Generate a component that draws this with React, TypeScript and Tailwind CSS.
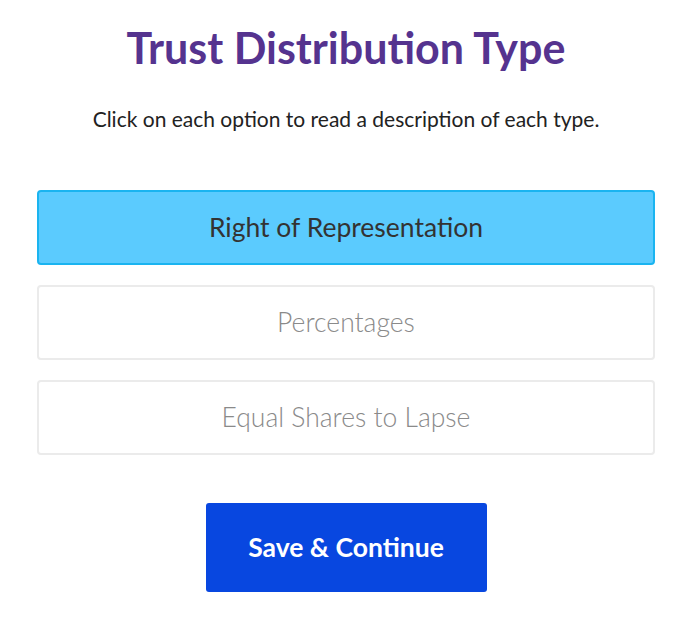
import React, { useState } from 'react';

const options = ['Right of Representation', 'Percentages', 'Equal Shares to Lapse'];

export default function App() {
  const [selected, setSelected] = useState(0);

  return (
    <div className="min-h-screen bg-white pl-[37px] pr-[32px] pt-[21px]" style={{ fontFamily: 'Lato, "Open Sans", sans-serif' }}>
      <h1 className="text-center text-[43px] font-bold leading-[54px] text-[#55338f]">Trust Distribution Type</h1>
      <p className="mt-[31px] text-center text-[21px] leading-[26px] text-[#222222]">
        Click on each option to read a description of each type.
      </p>

      <div className="mt-[58px] flex flex-col gap-[20px]">
        {options.map((opt, i) => (
          <button
            key={opt}
            onClick={() => setSelected(i)}
            className={`h-[75px] w-full rounded-[4px] border-2 text-[26.5px] ${
              selected === i
                ? 'border-[#1ab4f0] bg-[#5bcbfe] font-normal text-[#333333]'
                : 'border-[#ebebeb] bg-white font-light text-[#8a8a8a]'
            }`}
          >
            {opt}
          </button>
        ))}
      </div>

      <div className="mt-[48px] flex justify-center">
        <button className="h-[89px] w-[281px] rounded-[3px] bg-[#0847e0] text-[26.5px] font-bold text-white">
          Save &amp; Continue
        </button>
      </div>
    </div>
  );
}
